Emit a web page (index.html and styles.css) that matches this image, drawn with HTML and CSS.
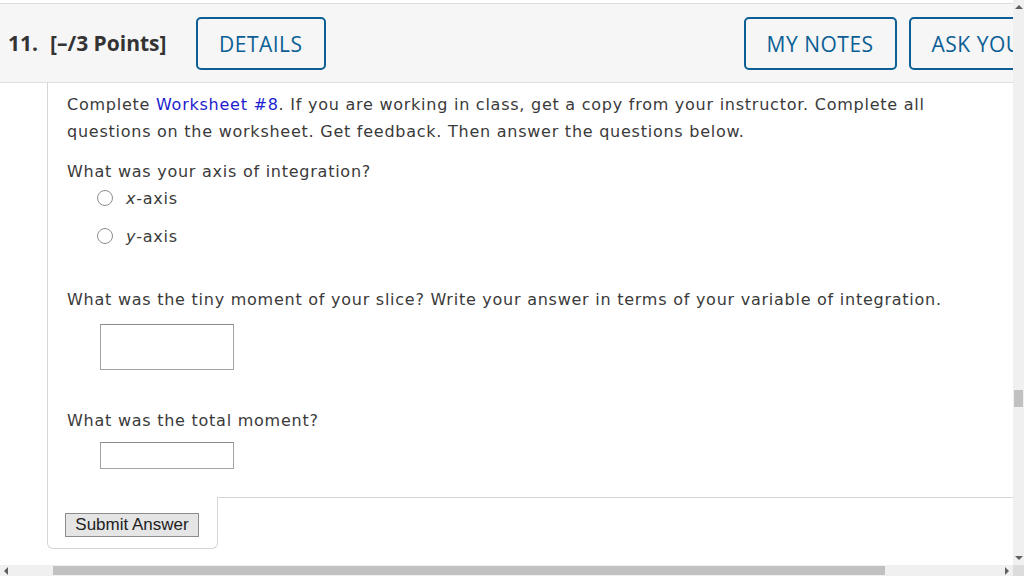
FILE: index.html
```html
<!DOCTYPE html>
<html>
<head>
<meta charset="utf-8">
<link rel="stylesheet" href="styles.css">
</head>
<body>
<div class="frame">
  <div class="viewport">
    <div class="top-gap"></div>
    <div class="qheader">
      <div class="qtitle"><span class="qnum">11.</span><span>[–/3 Points]</span></div>
      <button class="hbtn">DETAILS</button>
      <button class="hbtn hbtn-push">MY NOTES</button>
      <button class="hbtn">ASK YOUR TEACHER</button>
    </div>
    <div class="qbox">
      <div class="content">
        <p class="intro">Complete <span class="link">Worksheet #8</span>. If you are working in class, get a copy from your instructor. Complete all questions on the worksheet. Get feedback. Then answer the questions below.</p>
        <p class="q">What was your axis of integration?</p>
        <div class="opt"><span class="radio"></span><span class="lbl"><i>x</i>-axis</span></div>
        <div class="opt opt2"><span class="radio"></span><span class="lbl"><i>y</i>-axis</span></div>
        <p class="q q2">What was the tiny moment of your slice? Write your answer in terms of your variable of integration.</p>
        <div class="ans ans-tall"></div>
        <p class="q q2">What was the total moment?</p>
        <div class="ans ans-short"></div>
      </div>
      <div class="tabrow">
        <div class="tab"><button class="submit">Submit Answer</button></div>
        <div class="filler"></div>
      </div>
    </div>
  </div>
  <div class="vscroll">
    <span class="arr arr-up"></span>
    <span class="vthumb"></span>
    <span class="arr arr-down"></span>
  </div>
  <div class="hscroll">
    <span class="arr arr-left"></span>
    <span class="hthumb"></span>
    <span class="arr arr-right"></span>
  </div>
  <div class="corner"></div>
</div>
</body>
</html>
```

FILE: styles.css
```css
html, body {
  margin: 0;
  padding: 0;
  background: #ffffff;
}
.frame {
  width: 1024px;
  height: 576px;
  display: grid;
  grid-template-columns: 1013px 11px;
  grid-template-rows: 565px 11px;
  overflow: hidden;
}
.viewport {
  overflow: hidden;
  background: #fff;
}
.top-gap {
  height: 3px;
}
.qheader {
  height: 80px;
  box-sizing: border-box;
  border-top: 1px solid #dedede;
  border-bottom: 1px solid #dedede;
  background: #f6f6f6;
  display: flex;
  align-items: center;
  padding-left: 8px;
  overflow: hidden;
  white-space: nowrap;
}
.qtitle {
  font-family: "Open Sans", "Liberation Sans", sans-serif;
  font-weight: 700;
  font-size: 21px;
  color: #333;
  flex-shrink: 0;
  width: 188px;
}
.qnum {
  margin-right: 12px;
}
.hbtn {
  flex-shrink: 0;
  height: 53px;
  box-sizing: border-box;
  border: 2px solid #0b5f95;
  border-radius: 5px;
  background: transparent;
  color: #0b5f95;
  font-family: "Open Sans", "Liberation Sans", sans-serif;
  font-size: 21px;
  letter-spacing: 0.5px;
  padding: 0 21px;
  margin-right: 12px;
  margin-top: 1px;
}
.hbtn-push {
  margin-left: 406px;
}
.qbox {
  margin-left: 47px;
}
.content {
  border-left: 1px solid #d6d6d6;
  padding: 8px 0 28px 19px;
  font-family: "DejaVu Sans", Verdana, sans-serif;
  font-size: 16px;
  letter-spacing: 0.75px;
  color: #3a3a3a;
}
.content p {
  margin: 0;
  line-height: 27px;
}
.intro {
  width: 900px;
  margin-bottom: 13px !important;
}
.link {
  color: #1d1dcf;
  cursor: pointer;
}
.opt {
  display: flex;
  align-items: center;
  height: 26px;
  padding-left: 30px;
}
.opt2 {
  margin-top: 12px;
}
.radio {
  width: 16px;
  height: 16px;
  border: 1px solid #8d8d8d;
  border-radius: 50%;
  background: #fff;
  box-sizing: border-box;
  margin-right: 13px;
}
.lbl i {
  font-style: italic;
}
.q2 {
  margin-top: 37px !important;
}
.ans {
  width: 134px;
  box-sizing: border-box;
  border: 1px solid #a3a3a3;
  border-top-color: #8a8a8a;
  background: #fff;
  margin-left: 33px;
}
.ans-tall {
  height: 46px;
  margin-top: 11px;
}
.ans-short {
  height: 27px;
  margin-top: 8px;
}
.tabrow {
  display: flex;
}
.tab {
  width: 171px;
  height: 52px;
  box-sizing: border-box;
  border: 1px solid #d6d6d6;
  border-top: none;
  border-radius: 0 0 6px 6px;
  padding: 16px 0 0 17px;
}
.submit {
  display: block;
  width: 134px;
  height: 24px;
  box-sizing: border-box;
  background: #e5e5e5;
  border: 1px solid #8c8c8c;
  border-radius: 0;
  font-family: "Liberation Sans", Arial, sans-serif;
  font-size: 17px;
  color: #222;
  padding: 0;
}
.filler {
  flex: 1;
  border-top: 1px solid #d6d6d6;
  border-top-left-radius: 3px;
  margin-left: -1px;
}
.vscroll {
  background: #f0f0f0;
  display: flex;
  flex-direction: column;
  align-items: center;
}
.arr {
  width: 0;
  height: 0;
  border: 4px solid transparent;
}
.arr-up {
  border-bottom-color: #606060;
  border-top-width: 0;
  margin-top: 5px;
}
.vthumb {
  width: 9px;
  height: 17px;
  background: #c1c1c1;
  margin-top: 381px;
}
.arr-down {
  border-top-color: #606060;
  border-bottom-width: 0;
  margin-top: auto;
  margin-bottom: 5px;
}
.hscroll {
  background: #f0f0f0;
  display: flex;
  align-items: center;
}
.arr-left {
  border-right-color: #606060;
  border-left-width: 0;
  margin-left: 4px;
}
.hthumb {
  width: 832px;
  height: 9px;
  background: #c1c1c1;
  margin-left: 45px;
}
.arr-right {
  border-left-color: #606060;
  border-right-width: 0;
  margin-left: auto;
  margin-right: 4px;
}
.corner {
  background: #dcdcdc;
}
```
